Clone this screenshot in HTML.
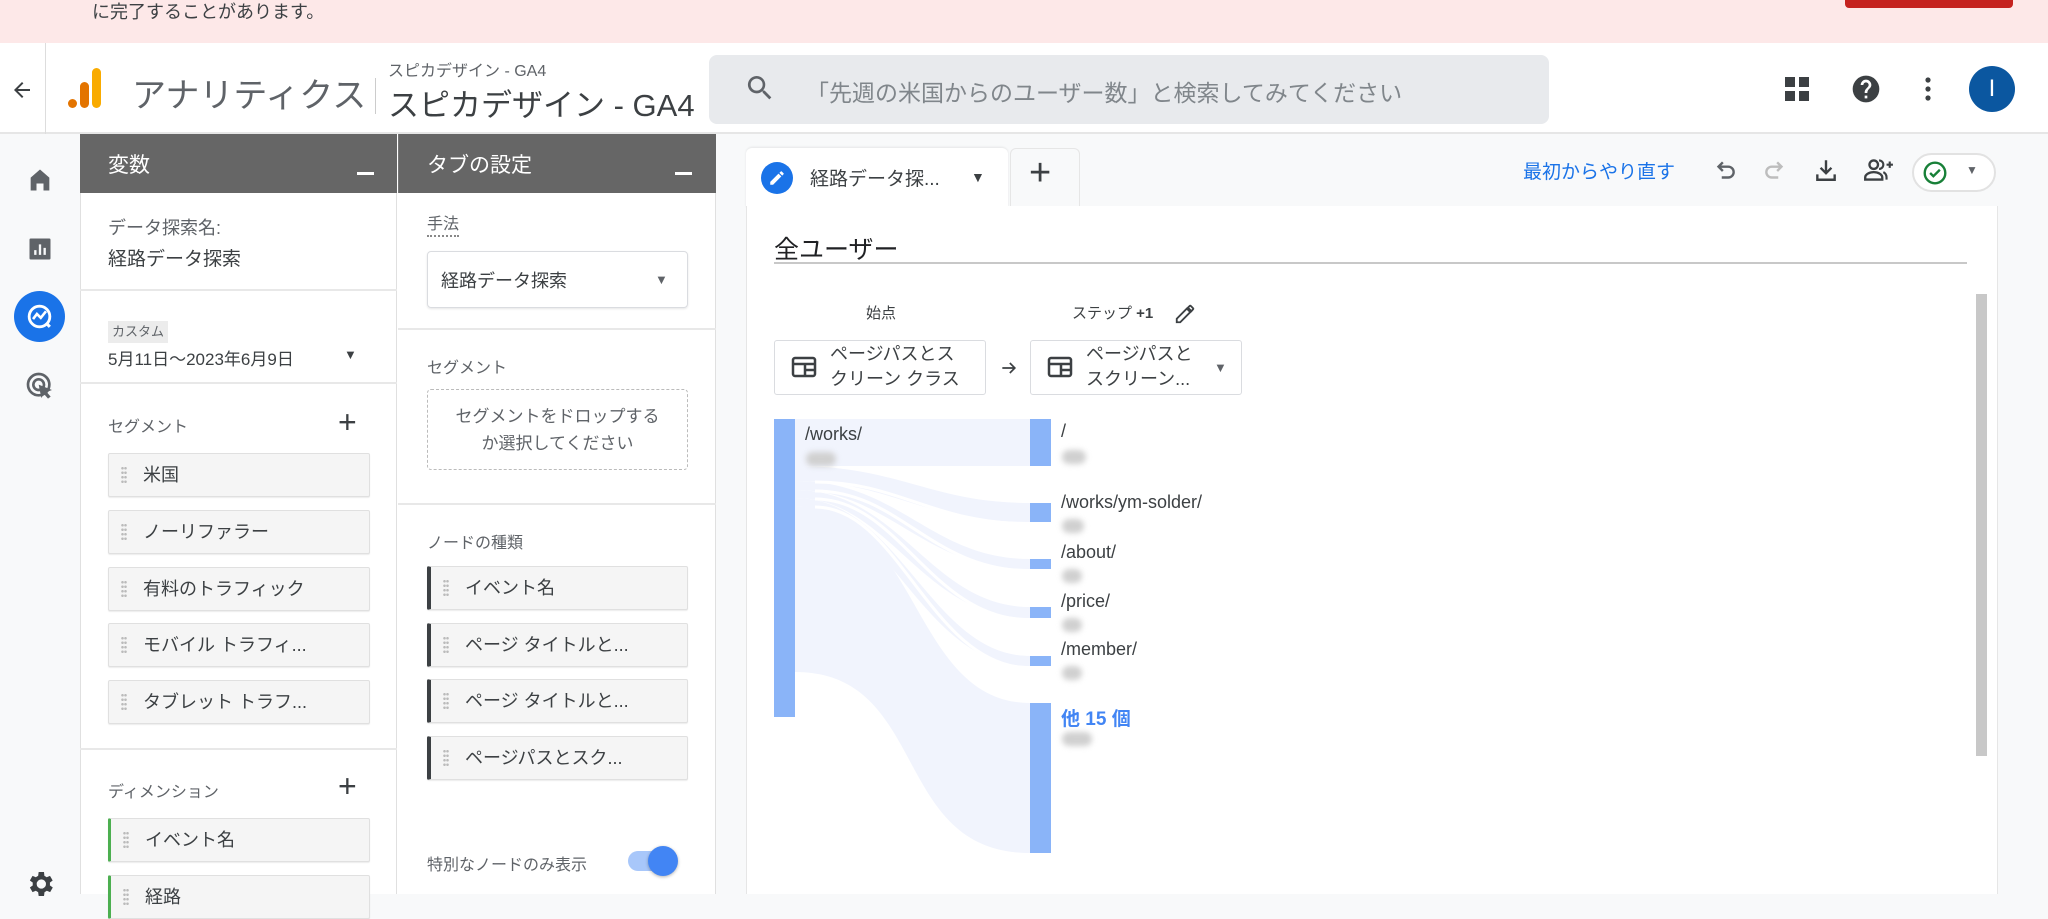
<!DOCTYPE html>
<html><head><meta charset="utf-8"><style>
*{box-sizing:border-box;margin:0;padding:0}
body{width:2048px;height:894px;overflow:hidden;background:#f8f9fa;font-family:"Liberation Sans","Noto Sans CJK JP",sans-serif;color:#3c4043;position:relative}
.a{position:absolute;white-space:nowrap}
.item{position:absolute;height:44px;background:#f5f5f5;border:1px solid #e0e0e0;border-radius:2px;font-size:18px;line-height:42px;padding-left:34px;color:#3c4043;box-shadow:0 1px 1px rgba(0,0,0,.08)}
.item:before{content:"";position:absolute;left:12px;top:12px;width:6px;height:18px;background-image:radial-gradient(circle,#bbb 1.2px,transparent 1.4px);background-size:3px 4.5px}
.dark{border-left:4px solid #3c4043}
.green{border-left:3px solid #4caf50}
.lbl{font-size:16px;color:#5f6368}
.hline{position:absolute;height:2px;background:#e8e8e8}
.blur{position:absolute;height:14px;background:#d0d0d0;border-radius:7px;filter:blur(3px)}
</style></head><body>
<div class="a" style="left:0;top:0;width:2048px;height:43px;background:#fde8e8"></div>
<div class="a" style="left:92px;top:-2px;font-size:18px;color:#3c4043">に完了することがあります。</div>
<div class="a" style="left:1845px;top:0;width:168px;height:8px;background:#c5221f;border-radius:0 0 4px 4px"></div>
<div class="a" style="left:0;top:43px;width:2048px;height:91px;background:#fff;border-bottom:2px solid #e6e6e6"></div>
<div class="a" style="left:45px;top:43px;width:1px;height:91px;background:#ddd"></div>
<svg class="a" style="left:10px;top:78px" width="24" height="24" viewBox="0 0 24 24"><path d="M20 11H7.8l5.6-5.6L12 4l-8 8 8 8 1.4-1.4L7.8 13H20z" fill="#3c4043"/></svg>
<svg class="a" style="left:66px;top:66px" width="40" height="44" viewBox="0 0 40 44"><rect x="26" y="2" width="9" height="40" rx="4.5" fill="#f9ab00"/><rect x="14" y="16" width="9" height="26" rx="4.5" fill="#e37400"/><circle cx="6.5" cy="37.5" r="4.5" fill="#e37400"/></svg>
<div class="a" style="left:132px;top:68px;font-size:34px;color:#5f6368">アナリティクス</div>
<div class="a" style="left:375px;top:78px;width:1px;height:36px;background:#ccc"></div>
<div class="a" style="left:388px;top:57px;font-size:16px;color:#5f6368">スピカデザイン - GA4</div>
<div class="a" style="left:388px;top:80px;font-size:31px;color:#3c4043">スピカデザイン - GA4</div>
<div class="a" style="left:709px;top:55px;width:840px;height:69px;background:#e8eaed;border-radius:8px"></div>
<svg class="a" style="left:744px;top:72px" width="32" height="32" viewBox="0 0 24 24"><path d="M15.5 14h-.8l-.3-.3A6.5 6.5 0 1 0 9.5 16a6.5 6.5 0 0 0 4.2-1.6l.3.3v.8l5 5 1.5-1.5-5-5zm-6 0A4.5 4.5 0 1 1 14 9.5 4.5 4.5 0 0 1 9.5 14z" fill="#5f6368"/></svg>
<div class="a" style="left:806px;top:74px;font-size:23px;color:#80868b">「先週の米国からのユーザー数」と検索してみてください</div>
<svg class="a" style="left:1783px;top:75px" width="28" height="28" viewBox="0 0 28 28"><g fill="#3c4043"><rect x="2" y="2" width="10" height="10"/><rect x="16" y="2" width="10" height="10"/><rect x="2" y="16" width="10" height="10"/><rect x="16" y="16" width="10" height="10"/></g></svg>
<svg class="a" style="left:1850px;top:73px" width="32" height="32" viewBox="0 0 24 24"><path d="M12 2a10 10 0 1 0 0 20 10 10 0 0 0 0-20zm1 17h-2v-2h2zm2.1-7.8-.9.9C13.5 12.9 13 13.5 13 15h-2v-.5c0-1.1.5-2.1 1.2-2.8l1.2-1.3A2 2 0 0 0 14 9a2 2 0 0 0-4 0H8a4 4 0 0 1 8 0c0 .9-.4 1.7-.9 2.2z" fill="#3c4043"/></svg>
<svg class="a" style="left:1916px;top:75px" width="24" height="28" viewBox="0 0 24 28"><g fill="#3c4043"><circle cx="12" cy="5" r="2.6"/><circle cx="12" cy="14" r="2.6"/><circle cx="12" cy="23" r="2.6"/></g></svg>
<div class="a" style="left:1969px;top:66px;width:46px;height:46px;border-radius:50%;background:#0b57a0;color:#fff;font-size:24px;text-align:center;line-height:46px">I</div>
<svg class="a" style="left:26px;top:166px" width="28" height="28" viewBox="0 0 24 24"><path d="M12 3 4 10v11h5v-6h6v6h5V10z" fill="#5f6368"/></svg>
<svg class="a" style="left:26px;top:235px" width="28" height="28" viewBox="0 0 24 24"><path d="M4 3h16a1 1 0 0 1 1 1v16a1 1 0 0 1-1 1H4a1 1 0 0 1-1-1V4a1 1 0 0 1 1-1zm3 10v4h2v-4zm4-5v9h2V8zm4 3v6h2v-6z" fill="#5f6368"/></svg>
<div class="a" style="left:14px;top:291px;width:51px;height:51px;border-radius:50%;background:#1a73e8"></div>
<svg class="a" style="left:24px;top:301px" width="31" height="31" viewBox="0 0 24 24"><circle cx="12" cy="12" r="8" fill="none" stroke="#fff" stroke-width="2.2"/><path d="M7 14l3-4 3 3 4-5" fill="none" stroke="#fff" stroke-width="2"/><path d="M17 17l3 3" stroke="#fff" stroke-width="2.4"/></svg>
<svg class="a" style="left:24px;top:370px" width="32" height="32" viewBox="0 0 24 24"><circle cx="11" cy="11" r="8" fill="none" stroke="#5f6368" stroke-width="2"/><circle cx="11" cy="11" r="4" fill="none" stroke="#5f6368" stroke-width="2"/><path d="M11 11l10 4-4 1.5 3 3.5-2 1.5-3-3.5-2 3z" fill="#5f6368"/></svg>
<svg class="a" style="left:24px;top:868px" width="32" height="32" viewBox="0 0 24 24"><path d="M19.4 13a7.6 7.6 0 0 0 0-2l2.1-1.6-2-3.5-2.5 1a7 7 0 0 0-1.7-1L15 3h-4l-.4 2.9a7 7 0 0 0-1.7 1l-2.5-1-2 3.5L6.6 11a7.6 7.6 0 0 0 0 2l-2.2 1.6 2 3.5 2.5-1a7 7 0 0 0 1.7 1L11 21h4l.4-2.9a7 7 0 0 0 1.7-1l2.5 1 2-3.5zM13 15.5a3.5 3.5 0 1 1 0-7 3.5 3.5 0 0 1 0 7z" fill="#3c4043"/></svg>
<div class="a" style="left:80px;top:134px;width:317px;height:760px;background:#fff;border-left:1px solid #e0e0e0;border-right:1px solid #e0e0e0"></div>
<div class="a" style="left:80px;top:134px;width:317px;height:59px;background:#666"></div>
<div class="a" style="left:108px;top:149px;font-size:21px;color:#fff">変数</div>
<div class="a" style="left:357px;top:172px;width:17px;height:3px;background:#fff"></div>
<div class="a" style="left:108px;top:214px;font-size:18px;color:#5f6368">データ探索名:</div>
<div class="a" style="left:108px;top:244px;font-size:19px;color:#3c4043">経路データ探索</div>
<div class="hline" style="left:80px;top:289px;width:317px"></div>
<div class="a" style="left:108px;top:321px;height:22px;padding:0 4px;background:#ececec;font-size:13px;line-height:22px;color:#5f6368">カスタム</div>
<div class="a" style="left:108px;top:345px;font-size:17px;color:#3c4043">5月11日～2023年6月9日</div>
<div class="a" style="left:344px;top:347px;font-size:13px;color:#3c4043">▼</div>
<div class="hline" style="left:80px;top:382px;width:317px"></div>
<div class="a lbl" style="left:108px;top:413px">セグメント</div>
<div class="a" style="left:338px;top:404px;font-size:32px;font-weight:300;color:#3c4043">+</div>
<div class="item" style="left:108px;top:453px;width:262px">米国</div>
<div class="item" style="left:108px;top:510px;width:262px">ノーリファラー</div>
<div class="item" style="left:108px;top:567px;width:262px">有料のトラフィック</div>
<div class="item" style="left:108px;top:623px;width:262px">モバイル トラフィ...</div>
<div class="item" style="left:108px;top:680px;width:262px">タブレット トラフ...</div>
<div class="hline" style="left:80px;top:748px;width:317px"></div>
<div class="a lbl" style="left:108px;top:778px">ディメンション</div>
<div class="a" style="left:338px;top:768px;font-size:32px;font-weight:300;color:#3c4043">+</div>
<div class="item green" style="left:108px;top:818px;width:262px">イベント名</div>
<div class="item green" style="left:108px;top:875px;width:262px">経路</div>
<div class="a" style="left:397px;top:134px;width:319px;height:760px;background:#fff;border-right:1px solid #e0e0e0"></div>
<div class="a" style="left:398px;top:134px;width:318px;height:59px;background:#666;border-left:1px solid #777"></div>
<div class="a" style="left:427px;top:149px;font-size:21px;color:#fff">タブの設定</div>
<div class="a" style="left:675px;top:172px;width:17px;height:3px;background:#fff"></div>
<div class="a" style="left:427px;top:215px;font-size:16px;color:#5f6368;border-bottom:2px dotted #888;line-height:20px">手法</div>
<div class="a" style="left:427px;top:251px;width:261px;height:57px;border:1px solid #dadce0;border-radius:4px;box-shadow:0 1px 2px rgba(0,0,0,.1)"></div>
<div class="a" style="left:441px;top:267px;font-size:18px;color:#3c4043">経路データ探索</div>
<div class="a" style="left:655px;top:272px;font-size:13px;color:#5f6368">▼</div>
<div class="hline" style="left:398px;top:328px;width:318px"></div>
<div class="a lbl" style="left:427px;top:354px">セグメント</div>
<div class="a" style="left:427px;top:389px;width:261px;height:81px;border:1px dashed #bbb;border-radius:4px"></div>
<div class="a" style="left:427px;top:403px;width:261px;text-align:center;font-size:17px;line-height:27px;color:#5f6368;white-space:normal">セグメントをドロップする<br>か選択してください</div>
<div class="hline" style="left:398px;top:503px;width:318px"></div>
<div class="a lbl" style="left:427px;top:529px">ノードの種類</div>
<div class="item dark" style="left:427px;top:566px;width:261px">イベント名</div>
<div class="item dark" style="left:427px;top:623px;width:261px">ページ タイトルと...</div>
<div class="item dark" style="left:427px;top:679px;width:261px">ページ タイトルと...</div>
<div class="item dark" style="left:427px;top:736px;width:261px">ページパスとスク...</div>
<div class="a" style="left:427px;top:851px;font-size:16px;color:#5f6368">特別なノードのみ表示</div>
<div class="a" style="left:628px;top:851px;width:44px;height:20px;border-radius:10px;background:#a8c7fa"></div>
<div class="a" style="left:648px;top:846px;width:30px;height:30px;border-radius:50%;background:#4285f4;box-shadow:0 1px 3px rgba(0,0,0,.3)"></div>
<div class="a" style="left:746px;top:148px;width:262px;height:60px;background:#fff;border-radius:6px 6px 0 0;box-shadow:0 -1px 2px rgba(0,0,0,.08)"></div>
<div class="a" style="left:761px;top:162px;width:32px;height:32px;border-radius:50%;background:#1a73e8"></div>
<svg class="a" style="left:768px;top:169px" width="18" height="18" viewBox="0 0 24 24"><path d="M3 17.2V21h3.8L17.8 9.9 14 6.1zM20.7 7a1 1 0 0 0 0-1.4l-2.3-2.3a1 1 0 0 0-1.4 0l-1.8 1.8 3.8 3.8z" fill="#fff"/></svg>
<div class="a" style="left:810px;top:164px;font-size:19px;color:#3c4043">経路データ探...</div>
<div class="a" style="left:971px;top:169px;font-size:14px;color:#3c4043">▼</div>
<div class="a" style="left:1010px;top:148px;width:70px;height:58px;background:#f8f9fa;border:1px solid #e6e6e6;border-bottom:none;border-radius:6px 6px 0 0"></div>
<div class="a" style="left:1029px;top:152px;font-size:38px;font-weight:300;color:#3c4043">+</div>
<div class="a" style="left:1523px;top:157px;font-size:19px;color:#1a73e8">最初からやり直す</div>
<svg class="a" style="left:1712px;top:158px" width="26" height="26" viewBox="0 0 24 24"><path d="M7 8h8a5 5 0 0 1 0 10H9" fill="none" stroke="#5f6368" stroke-width="2.2"/><path d="M10 4 6 8l4 4" fill="none" stroke="#5f6368" stroke-width="2.2"/></svg>
<svg class="a" style="left:1762px;top:158px" width="26" height="26" viewBox="0 0 24 24"><path d="M17 8H9a5 5 0 0 0 0 10h6" fill="none" stroke="#bdbdbd" stroke-width="2.2"/><path d="M14 4l4 4-4 4" fill="none" stroke="#bdbdbd" stroke-width="2.2"/></svg>
<svg class="a" style="left:1813px;top:157px" width="26" height="26" viewBox="0 0 24 24"><path d="M12 3v12M7 10l5 5 5-5M4 16v5h16v-5" fill="none" stroke="#3c4043" stroke-width="2.2"/></svg>
<svg class="a" style="left:1862px;top:157px" width="32" height="26" viewBox="0 0 30 24"><circle cx="11" cy="7" r="4" fill="none" stroke="#3c4043" stroke-width="2.2"/><path d="M3 21v-2c0-3 4-5 8-5s8 2 8 5v2z" fill="none" stroke="#3c4043" stroke-width="2.2"/><path d="M16 3a4 4 0 0 1 0 8M20 14c2 1 3 3 3 5v2" fill="none" stroke="#3c4043" stroke-width="2"/><path d="M26 4v6M23 7h6" stroke="#3c4043" stroke-width="2"/></svg>
<div class="a" style="left:1912px;top:153px;width:84px;height:39px;border:2px solid #e2e2e2;border-radius:20px;background:#fff"></div>
<svg class="a" style="left:1922px;top:160px" width="26" height="26" viewBox="0 0 24 24"><circle cx="12" cy="12" r="9.5" fill="none" stroke="#188038" stroke-width="2.2"/><path d="M7.5 12l3 3 6-6" fill="none" stroke="#188038" stroke-width="2.2"/></svg>
<div class="a" style="left:1966px;top:163px;font-size:12px;color:#5f6368">▼</div>
<div class="a" style="left:746px;top:206px;width:1252px;height:688px;background:#fff;border-left:1px solid #e6e6e6;border-right:1px solid #e6e6e6"></div>
<div class="a" style="left:774px;top:230px;font-size:25px;color:#202124">全ユーザー</div>
<div class="a" style="left:774px;top:262px;width:1193px;height:2px;background:#c8c8c8"></div>
<div class="a" style="left:1976px;top:294px;width:11px;height:462px;background:#c8c8c8"></div>
<div class="a" style="left:866px;top:302px;font-size:15px;color:#3c4043">始点</div>
<div class="a" style="left:1072px;top:302px;font-size:15px;color:#3c4043">ステップ <b>+1</b></div>
<svg class="a" style="left:1174px;top:303px" width="22" height="22" viewBox="0 0 24 24"><path d="M3 17.2V21h3.8L17.8 9.9 14 6.1zM20.7 7a1 1 0 0 0 0-1.4l-2.3-2.3a1 1 0 0 0-1.4 0l-1.8 1.8 3.8 3.8z" fill="none" stroke="#3c4043" stroke-width="2"/></svg>
<div class="a" style="left:774px;top:340px;width:212px;height:55px;border:1px solid #dadce0;border-radius:3px"></div>
<svg class="a" style="left:791px;top:356px" width="26" height="22" viewBox="0 0 26 22"><rect x="2" y="2" width="22" height="18" rx="2" fill="none" stroke="#3c4043" stroke-width="2.5"/><path d="M2 8h22M14 8v12M14 14h10" stroke="#3c4043" stroke-width="2.5"/></svg>
<div class="a" style="left:830px;top:342px;font-size:18px;line-height:25px;color:#3c4043">ページパスとス<br>クリーン クラス</div>
<svg class="a" style="left:998px;top:358px" width="22" height="20" viewBox="0 0 24 24"><path d="M4 12h15M13 6l6 6-6 6" fill="none" stroke="#3c4043" stroke-width="2"/></svg>
<div class="a" style="left:1030px;top:340px;width:212px;height:55px;border:1px solid #dadce0;border-radius:3px"></div>
<svg class="a" style="left:1047px;top:356px" width="26" height="22" viewBox="0 0 26 22"><rect x="2" y="2" width="22" height="18" rx="2" fill="none" stroke="#3c4043" stroke-width="2.5"/><path d="M2 8h22M14 8v12M14 14h10" stroke="#3c4043" stroke-width="2.5"/></svg>
<div class="a" style="left:1086px;top:342px;font-size:18px;line-height:25px;color:#3c4043">ページパスと<br>スクリーン...</div>
<div class="a" style="left:1214px;top:360px;font-size:13px;color:#5f6368">▼</div>
<svg class="a" style="left:0;top:0" width="2048" height="894">
<g fill="#f1f4fd">
<rect x="795" y="419" width="235" height="47"/>
<path d="M795 466 C900 466 930 503 1030 503 L1030 522 C920 522 890 481 795 481Z"/>
<path d="M795 481 C900 481 930 559 1030 559 L1030 569 C920 569 890 490 795 490Z"/>
<path d="M795 490 C900 490 930 607 1030 607 L1030 618 C920 618 890 498 795 498Z"/>
<path d="M795 498 C900 498 930 656 1030 656 L1030 666 C920 666 890 506 795 506Z"/>
<path d="M795 506 C920 506 910 703 1030 703 L1030 853 C890 853 930 672 795 672Z"/>
</g>
<g stroke="#fff" stroke-width="3" fill="none">
<path d="M815 482 C900 482 930 523 1030 524"/>
<path d="M815 491 C900 491 930 570 1030 571"/>
<path d="M815 499 C900 499 930 619 1030 620"/>
<path d="M815 507 C900 507 930 667 1030 668"/>
</g>
<g fill="#8ab4f8">
<rect x="774" y="419" width="21" height="298"/>
<rect x="1030" y="419" width="21" height="47"/>
<rect x="1030" y="503" width="21" height="19"/>
<rect x="1030" y="559" width="21" height="10"/>
<rect x="1030" y="607" width="21" height="11"/>
<rect x="1030" y="656" width="21" height="10"/>
<rect x="1030" y="703" width="21" height="150"/>
</g>
</svg>
<div class="a" style="left:805px;top:424px;font-size:18px;color:#3c4043">/works/</div>
<div class="blur" style="left:806px;top:452px;width:30px"></div>
<div class="a" style="left:1061px;top:421px;font-size:18px;color:#3c4043">/</div>
<div class="blur" style="left:1062px;top:450px;width:24px"></div>
<div class="a" style="left:1061px;top:492px;font-size:18px;color:#3c4043">/works/ym-solder/</div>
<div class="blur" style="left:1062px;top:519px;width:22px"></div>
<div class="a" style="left:1061px;top:542px;font-size:18px;color:#3c4043">/about/</div>
<div class="blur" style="left:1062px;top:569px;width:20px"></div>
<div class="a" style="left:1061px;top:591px;font-size:18px;color:#3c4043">/price/</div>
<div class="blur" style="left:1062px;top:618px;width:20px"></div>
<div class="a" style="left:1061px;top:639px;font-size:18px;color:#3c4043">/member/</div>
<div class="blur" style="left:1062px;top:666px;width:20px"></div>
<div class="a" style="left:1061px;top:704px;font-size:19px;font-weight:bold;color:#4285f4">他 15 個</div>
<div class="blur" style="left:1062px;top:732px;width:30px"></div>
</body></html>
